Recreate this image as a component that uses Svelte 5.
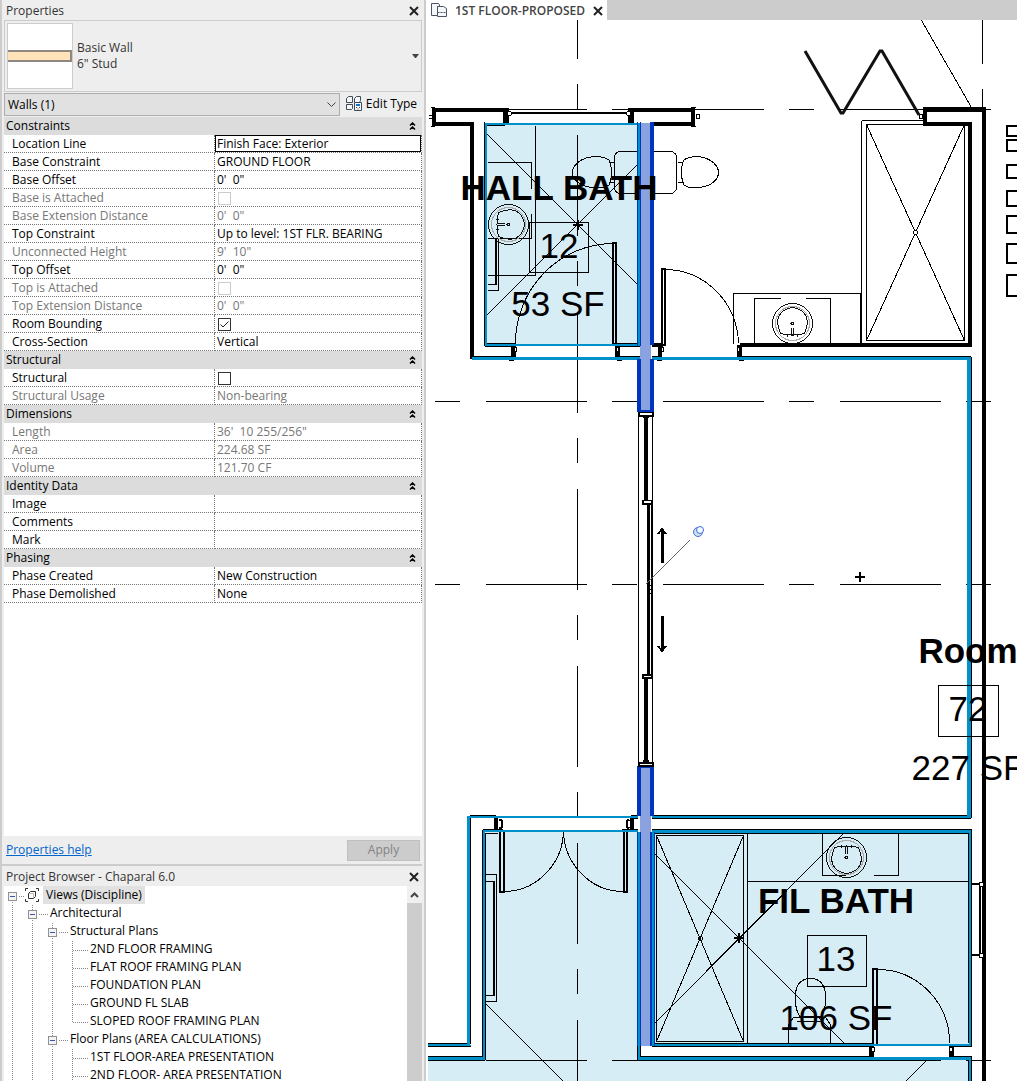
<script lang="ts">
type Row = { name: string; value?: string; check?: boolean; off?: boolean; focus?: boolean };
type Group = { title: string; rows: Row[] };
type Node = { label: string; level: number; open?: boolean; last?: boolean };

const groups: Group[] = [
  {
    title: "Constraints",
    rows: [
      { name: "Location Line", value: "Finish Face: Exterior", focus: true },
      { name: "Base Constraint", value: "GROUND FLOOR" },
      { name: "Base Offset", value: "0'  0\"" },
      { name: "Base is Attached", check: false, off: true },
      { name: "Base Extension Distance", value: "0'  0\"", off: true },
      { name: "Top Constraint", value: "Up to level: 1ST FLR. BEARING" },
      { name: "Unconnected Height", value: "9'  10\"", off: true },
      { name: "Top Offset", value: "0'  0\"" },
      { name: "Top is Attached", check: false, off: true },
      { name: "Top Extension Distance", value: "0'  0\"", off: true },
      { name: "Room Bounding", check: true },
      { name: "Cross-Section", value: "Vertical" },
    ],
  },
  {
    title: "Structural",
    rows: [
      { name: "Structural", check: false },
      { name: "Structural Usage", value: "Non-bearing", off: true },
    ],
  },
  {
    title: "Dimensions",
    rows: [
      { name: "Length", value: "36'  10 255/256\"", off: true },
      { name: "Area", value: "224.68 SF", off: true },
      { name: "Volume", value: "121.70 CF", off: true },
    ],
  },
  {
    title: "Identity Data",
    rows: [
      { name: "Image", value: "" },
      { name: "Comments", value: "" },
      { name: "Mark", value: "" },
    ],
  },
  {
    title: "Phasing",
    rows: [
      { name: "Phase Created", value: "New Construction" },
      { name: "Phase Demolished", value: "None" },
    ],
  },
];

const tree: Node[] = [
  { label: "Views (Discipline)", level: 0, open: true },
  { label: "Architectural", level: 1, open: true },
  { label: "Structural Plans", level: 2, open: true },
  { label: "2ND FLOOR FRAMING", level: 3 },
  { label: "FLAT ROOF FRAMING PLAN", level: 3 },
  { label: "FOUNDATION PLAN", level: 3 },
  { label: "GROUND FL SLAB", level: 3 },
  { label: "SLOPED ROOF FRAMING PLAN", level: 3, last: true },
  { label: "Floor Plans (AREA CALCULATIONS)", level: 2, open: true },
  { label: "1ST FLOOR-AREA PRESENTATION", level: 3 },
  { label: "2ND FLOOR- AREA PRESENTATION", level: 3 },
];

// dotted connector lines of one tree row, 20px per level
function guides(node: Node) {
  const x = 8 + node.level * 20;
  let d = "";
  for (let i = 0; i < node.level; i++) d += `M${8 + i * 20} 0V18`;
  if (node.open) {
    d += `M${x + 6} 10H${x + 15}`;
    d += node.level === 0 ? `M${x} 15V18` : `M${x} 0V5M${x} 15V18`;
  } else {
    d += `M${x} 0V${node.last ? 10 : 18}M${x} 10H${x + 15}`;
  }
  return d;
}

const slug = (group: string, name: string) => `${group}-${name}`.toLowerCase().replaceAll(" ", "-");

// partly visible stair treads at the right edge: top and height
const treads = [
  [126, 10],
  [140, 11],
  [165, 13],
  [191, 15],
  [216, 17],
  [244, 19],
  [275, 21],
];

const axes = [109, 401, 584, 1060];
</script>

<div class="app">
  <aside class="sidebar">
    <section class="panel properties">
      <header class="panel-head">
        <h2>Properties</h2>
        <button class="close" aria-label="Close Properties">
          <svg width="10" height="10" viewBox="0 0 10 10"><path d="M1 1L9 9M9 1L1 9" /></svg>
        </button>
      </header>

      <button class="type-selector">
        <svg class="thumb" width="66" height="66" viewBox="0 0 66 66">
          <rect x="0.5" y="0.5" width="65" height="65" fill="#fff" stroke="#ccc" />
          <path d="M1 27H65V39H1z" fill="#8f8880" />
          <path d="M1 29H63V37H1z" fill="#ffe3b8" />
        </svg>
        <span class="type-name">Basic Wall<br>6" Stud</span>
        <svg class="caret" width="7" height="4" viewBox="0 0 7 4"><path d="M0 0H7L4 4H3z" fill="#444" /></svg>
      </button>

      <div class="filter">
        <div class="combo">
          <select aria-label="Selection filter">
            <option>Walls (1)</option>
          </select>
          <svg width="9" height="6" viewBox="0 0 9 6"><path d="M0.5 0.5L4.5 4.5L8.5 0.5" /></svg>
        </div>
        <button class="edit-type">
          <svg width="18" height="17" viewBox="0 0 18 17" fill="#f4f6f8" stroke="#3f4a5a">
            <path d="M1.5 3.5L3.5 1.5H7.5V7.5H1.5zM9.5 3.5L11.5 1.5H15.5V5.5L14.5 7.5H9.5z" />
            <path d="M1.5 9.5H7.5V13.5L6.5 14.5H1.5z" />
            <path d="M9.5 7.5H16.5V15.5H9.5z" />
            <path d="M11 10H15" stroke="#1f6fc0" stroke-width="2" />
            <path d="M11 12.5H12M14 12.5H15M12.5 14H13.5" />
          </svg>
          Edit Type
        </button>
      </div>

      <div class="grid">
        <table>
          <colgroup>
            <col class="name-col">
            <col>
          </colgroup>
          {#each groups as group}
            <tbody>
              <tr class="group">
                <th colspan="2">
                  <button>
                    {group.title}
                    <svg width="7" height="8" viewBox="0 0 7 8"><path d="M1 3.5L3.5 1L6 3.5M1 7.5L3.5 5L6 7.5" /></svg>
                  </button>
                </th>
              </tr>
              {#each group.rows as row}
                <tr class:off={row.off}>
                  <th scope="row"><label for={slug(group.title, row.name)}>{row.name}</label></th>
                  <td class:focus={row.focus}>
                    {#if row.check !== undefined}
                      <input id={slug(group.title, row.name)} type="checkbox" checked={row.check} disabled={row.off}>
                    {:else}
                      <input id={slug(group.title, row.name)} type="text" value={row.value} disabled={row.off}>
                    {/if}
                  </td>
                </tr>
              {/each}
            </tbody>
          {/each}
        </table>
      </div>

      <footer class="panel-foot">
        <a href="#help">Properties help</a>
        <button class="apply" disabled>Apply</button>
      </footer>
    </section>

    <section class="panel browser">
      <header class="panel-head">
        <h2>Project Browser - Chaparal 6.0</h2>
        <button class="close" aria-label="Close Project Browser">
          <svg width="10" height="10" viewBox="0 0 10 10"><path d="M1 1L9 9M9 1L1 9" /></svg>
        </button>
      </header>
      <div class="tree-wrap">
        <ul class="tree">
          {#each tree as node}
            {@const x = 8 + node.level * 20}
            <li>
              <button class:root={node.level === 0}>
                <svg width={x + (node.level === 0 ? 12 : 18)} height="18" shape-rendering="crispEdges">
                  <path d={guides(node)} transform="translate(0.5 0.5)" stroke="#888" stroke-dasharray="1 1" fill="none" />
                  {#if node.open}
                    <rect x={x - 3.5} y="6.5" width="8" height="8" fill="#f4f4f4" stroke="#919191" />
                    <path d="M{x - 2} 10.5h5" stroke="#3a55a8" />
                  {/if}
                </svg>
                {#if node.level === 0}
                  <svg class="views" width="14" height="14" viewBox="0 0 14 14" fill="none" stroke="#333">
                    <path d="M3 .5H.5V3M11 .5H13.5V3M3 13.5H.5V11M11 13.5H13.5V11" />
                    <path d="M3.5 5.5L5.5 3.5H10.5V8.5L8.5 10.5H3.5z" />
                    <path d="M4 5.5H8.5V10" stroke="#bbb" />
                  </svg>
                {/if}
                <span>{node.label}</span>
              </button>
            </li>
          {/each}
        </ul>
        <div class="scrollbar">
          <button aria-label="Scroll up">
            <svg width="9" height="6" viewBox="0 0 9 6"><path d="M1 5L4.5 1.5L8 5" /></svg>
          </button>
          <div class="scroll-thumb"></div>
        </div>
      </div>
    </section>
  </aside>

  <main class="view">
    <nav class="tabs">
      <div class="tab">
        <svg width="17" height="15" viewBox="0 0 17 15" fill="#f6f7f9" stroke="#4a5462">
          <path d="M0.5 0.5H7.5L8.5 2V12.5H0.5z" />
          <path d="M6.5 3.5H12.5L15.5 5.5V13.5H6.5z" />
          <path d="M6.5 3.5V9.5M6.5 9.5H15.5" stroke-dasharray="2 1" />
        </svg>
        <a href="#plan">1ST FLOOR-PROPOSED</a>
        <button class="close" aria-label="Close view">
          <svg width="10" height="10" viewBox="0 0 10 10"><path d="M1 1L9 9M9 1L1 9" /></svg>
        </button>
      </div>
    </nav>

    <div class="canvas">
      <svg class="plan" viewBox="428 20 589 1061" preserveAspectRatio="xMinYMin slice" shape-rendering="crispEdges">
        <!-- room fills -->
        <g fill="#d7edf5">
          <rect x="485" y="123" width="154" height="222" />
          <rect x="484" y="831" width="154" height="250" />
          <rect x="652" y="831" width="318" height="215" />
          <rect x="426" y="1058" width="545" height="23" />
        </g>
        <path d="M428 1047H471V817H638V830H484V1057H428zM638 1046H971V1057H638z" fill="#fff" />

        <!-- grid axes -->
        <g stroke="#000" stroke-dasharray="101 25 25 26" transform="translate(0.5 0.5)">
          {#each axes as y}
            <path d="M308 {y}H992" />
          {/each}
          <path d="M577 -43V1081" />
          <path d="M982 -38V109" />
        </g>

        <!-- thin linework -->
        <g fill="none" stroke="#000" transform="translate(0.5 0.5)">
          <path d="M535 125V275H487M487 162H531V188M531 213V238H487M498 238V290H487M487 284H496" />
          <path d="M486 133L638 285M638 163L486 315" />
          <rect x="614" y="151" width="62" height="42" rx="6" />
          <path d="M609 162H614M609 182H614M677 162H682M677 182H682" />
          <path d="M609 160Q604 156 594 156C580 157 572 165 572 172S580 187 594 187Q604 188 609 184Q613 172 609 160z" />
          <path d="M683 160Q687 156 698 156C712 158 718 166 718 172S712 186 698 187Q687 188 683 184Q679 172 683 160z" />
          <path d="M613 243A98 100 0 0 0 515 343" />
          <path d="M665 269A74 76 0 0 1 738 343" />

          <path d="M921 20L971 107" />
          <path d="M861 120H922M861 120V343M866 124H964V340H866zM866 124L964 340M964 124L866 340" />
          <circle cx="915" cy="232" r="2" fill="#fff" />
          <path d="M733 343V293H860V343M754 342V298H780M805 298H830V342" />

          <path d="M504 891A60 62 0 0 0 563 829A60 62 0 0 0 623 891" />
          <path d="M485 874H496V1001H485M485 881H494M485 995H494M485 1003L563 1081" />
          <path d="M656 835H743V1041H656zM656 835L743 1041M743 835L656 1041M747 831V1043M747 881H968" />
          <circle cx="700" cy="938" r="2" />
          <path d="M653 852L846 1045M653 1024L845 831" />
          <path d="M822 831V875H845M873 875H898V831" />
          <path d="M877 969A72 73 0 0 1 949 1042" />
          <path d="M799 1016C792 1002 792 978 810 978S828 1002 821 1016z" />
          <path d="M788 1043V1024L793 1017H825L830 1024V1043M796 1021H822" />
          <path d="M927 1059L905 1081" />
        </g>

        <!-- basins -->
        {#each [[508, 224, -90], [792, 323, 180], [846, 857, 0]] as [x, y, angle]}
          <g fill="none" stroke="#111" transform="translate({x + 0.5} {y + 0.5}) rotate({angle})">
            <circle r="20" />
            <circle r="17" stroke="#aaa" />
            <path d="M-12 -10Q0 -13 12 -10C18 4 14 14 0 16C-14 14 -18 4 -12 -10z" />
            <path d="M-1 -12V-4M1 -12V-4M-5 -13V-10M5 -13V-10" />
            <circle r="1.5" />
          </g>
        {/each}

        <!-- exterior and partition walls -->
        <g fill="#000">
          <path d="M432 108H509V125H503V112H436V122H474V359H470V126H432z" />
          <path d="M628 108H695V126H654V122H691V112H634V125H628z" />
          <path d="M431 107H435V108H431zM431 126H435V127H431zM691 107H696V108H691zM691 126H696V127H691z" />
          <path d="M923 107H986V1081H982V112H927V122H972V347H740V343H968V126H923z" />
          <rect x="509" y="112" width="119" height="2" />
          <rect x="860" y="293" width="2" height="50" />
          <path d="M511 345H516V357H511zM615 345H620V357H615zM658 345H662V357H658zM737 345H742V357H737z" />
          <path d="M509 360H514V361H509zM617 360H622V361H617zM657 360H662V361H657zM739 360H744V361H739z" />
          <path d="M472 356H513V357H472zM484 122H485V346H484zM485 343H515V347H485zM615 343H640V347H615zM615 356H640V357H615zM652 343H663V347H652zM652 356H662V357H652zM742 356H971V357H742zM971 357H972V818H971zM484 125H505V126H484z" />
          <path d="M470 815H496V816H470zM470 818H471V1044H470zM631 815H638V816H631zM631 818H638V819H631zM652 815H971V816H652zM652 818H971V819H652z" />
          <path d="M484 833H498V834H484zM483 829H503V830H483zM482 830H483V1057H482zM485 833H486V1060H485zM622 829H638V830H622z" />
          <path d="M652 829H971V830H652zM652 833H969V834H652zM971 829H972V1047H971zM968 833H969V1043H968z" />
          <path d="M426 1043H468V1044H426zM426 1046H471V1047H426zM426 1056H485V1057H426zM426 1060H485V1061H426z" />
          <path d="M652 1043H873V1044H652zM652 1046H873V1047H652zM949 1046H972V1047H949zM640 1056H873V1057H640zM949 1056H972V1057H949zM637 1060H940V1061H637zM971 1057H972V1081H971zM968 1060H969V1081H968z" />
          <path d="M637 1046H638V1060H637zM640 1046H641V1057H640z" />
          <path d="M494 817H498V831H494zM630 817H634V831H630zM869 1046H874V1058H869zM949 1046H954V1058H949z" />
          <path d="M493 881H495V995H493zM495 238H497V284H495z" />
        </g>
        <g fill="#fff" stroke="#000" transform="translate(0.5 0.5)">
          <circle cx="509" cy="113" r="2" />
          <circle cx="628" cy="113" r="2" />
          <path d="M428 115H432V118H428M696 114H699V118H696zM919 114H922V118H919z" />
          <path d="M514 347h2v4h-2zM616 347h2v4h-2zM661 347h2v4h-2zM737 347h2v4h-2z" />
          <path d="M871 1047h3v4h-3zM949 1047h3v4h-3z" />
          <path d="M499 819C503 820 503 827 499 828M629 819C625 820 625 827 629 828" stroke-width="2" />
        </g>

        <!-- door leaves -->
        <g fill="none" stroke="#000" stroke-width="1.5">
          <rect x="613" y="243" width="3" height="101" />
          <rect x="662" y="269" width="3" height="76" />
          <rect x="500" y="831" width="4" height="61" />
          <rect x="624" y="831" width="3" height="61" />
          <rect x="873" y="969" width="4" height="76" />
        </g>
        <path d="M805 51L841 113H843L880 51H882L919 115" fill="none" stroke="#111" stroke-width="3" shape-rendering="auto" />
        <path d="M972 884H984M972 955H984" stroke="#000" stroke-width="2" />
        <rect x="979" y="884" width="2" height="71" fill="#000" />
        <path d="M979 882h4v4h-4zM979 953h4v4h-4z" fill="#fff" stroke="#000" />

        {#each treads as [y, h]}
          <rect x="1007" y={y} width="20" height={h} fill="none" stroke="#000" stroke-width="2" />
        {/each}

        <!-- room boundaries -->
        <g fill="#0091cb">
          <path d="M485 123H640V346H485zM487 125V344H638V125z" fill-rule="evenodd" />
          <path d="M472 357H640V360H472zM652 357H971V818H652V816H967V360H652z" />
          <path d="M467 816H638V818H470V1044L471 1046H426V1044H467z" />
          <path d="M483 830H638V832H485V1060H426V1057H483z" />
          <path d="M652 830H971V1046H652zM654 833V1044H969V833z" fill-rule="evenodd" />
          <path d="M638 1046H640V1057H971V1081H969V1060H638z" />
        </g>

        <!-- selected wall -->
        <rect x="640" y="123" width="11" height="289" fill="#8aa2e0" />
        <rect x="640" y="767" width="11" height="279" fill="#8aa2e0" />
        <g fill="#0036bd">
          <path d="M637 122H638V346H637zM640 122H641V346H640zM650 122H654V345H650z" />
          <path d="M637 359H641V412H637zM650 359H654V412H650zM637 410H654V412H637z" />
          <path d="M637 766H654V768H637zM637 766H641V816H637zM650 766H654V816H650z" />
          <path d="M637 832H638V1046H637zM640 832H641V1046H640zM650 832H652V1046H650zM654 832H655V1046H654z" />
        </g>
        <path d="M638 832H640V1046H638z" fill="#0091cb" />

        <!-- sliding window in the selected wall -->
        <g stroke="#000" fill="none">
          <path d="M638.5 412V767M652.5 412V767" />
          <path d="M639 412.5H653V416H639zM639 763H653V766H639z" stroke-width="1.5" fill="#fff" />
          <path d="M643 417H649M643 761H649M643 500.5H652V504H643zM643 675H652V678H643z" stroke-width="1.5" />
          <path d="M646 418V500M646 678V762" stroke-width="4" />
          <path d="M648.5 504V675" stroke-width="3" />
          <path d="M651.5 504V675M649 585H652V589H649zM649 589H652V593H649z" />
        </g>
        <g stroke="#000" fill="none">
          <path d="M662 529V563M662 616V650" stroke-width="3" />
          <path d="M658 534L662 529L666 534M658 646L662 651L666 646" stroke-width="2" />
        </g>
        <path d="M646 584L690 540" stroke="#666" shape-rendering="auto" />
        <g stroke="#3f6fe0" shape-rendering="auto">
          <circle cx="698" cy="532" r="4.5" fill="#cfe3e6" />
          <circle cx="700" cy="530" r="3.5" fill="#f4f8ff" />
        </g>

        <!-- room reference crosses -->
        <g stroke="#000" stroke-width="2">
          <path d="M573 225H583M578 220V230M855 577H865M860 572V582M734 938H744M739 933V943" />
        </g>

        <!-- room tags -->
        <g fill="none" stroke="#000">
          <rect x="529.5" y="222.5" width="59" height="50" />
          <rect x="807.5" y="935.5" width="59" height="51" />
          <rect x="938.5" y="685.5" width="60" height="51" />
        </g>
        <g class="tags" text-anchor="middle">
          <text class="room" x="559" y="200">HALL BATH</text>
          <text x="559" y="258">12</text>
          <text x="558" y="316">53 SF</text>
          <text class="room" x="836" y="913">FIL BATH</text>
          <text x="836" y="971">13</text>
          <text x="836" y="1030">106 SF</text>
          <text class="room" x="968" y="663">Room</text>
          <text x="968" y="721">72</text>
          <text x="968" y="780">227 SF</text>
        </g>
      </svg>
    </div>
  </main>
</div>

<style>
:global(body) {
  margin: 0;
}

.app {
  display: flex;
  height: 100vh;
  overflow: hidden;
  font-family: "Open Sans", "Noto Sans", sans-serif;
  font-size: 12px;
  line-height: 18px;
  color: #000;
  background: #fff;
}

button,
select,
input {
  font: inherit;
  color: inherit;
  margin: 0;
  padding: 0;
  border: 0;
  background: none;
}

.sidebar {
  flex: none;
  display: flex;
  flex-direction: column;
  width: 420px;
  border: solid #ccc;
  border-width: 0 2px;
  padding: 0 2px 0 0;
  background: #eee;
}

.panel {
  display: flex;
  flex-direction: column;
  padding-left: 2px;
}

.properties {
  flex: 1;
  min-height: 0;
}

.browser {
  flex: none;
  height: 215px;
  border-top: 2px solid #ccc;
}

.panel-head {
  display: flex;
  align-items: center;
  justify-content: space-between;
  box-sizing: border-box;
  height: 20px;
  padding: 2px 2px 0;
  color: #333;
}

h2 {
  margin: 0;
  font-size: 12px;
  font-weight: 400;
}

.close {
  display: flex;
  padding: 1px;
}

.close svg {
  fill: none;
  stroke: #222;
  stroke-width: 2;
}

.type-selector {
  display: flex;
  align-items: center;
  gap: 4px;
  height: 72px;
  padding: 0 2px;
  border: 1px solid #ccc;
  text-align: left;
  line-height: 16px;
  color: #333;
}

.type-name {
  flex: 1;
}

.filter {
  display: flex;
  align-items: center;
  gap: 5px;
  height: 25px;
}

.combo {
  position: relative;
  flex: 1;
}

.combo select {
  display: block;
  width: 100%;
  height: 23px;
  padding: 0 3px;
  border: 1px solid #adadad;
  border-radius: 0;
  background: #e1e1e1;
  appearance: none;
}

.combo svg {
  position: absolute;
  right: 4px;
  top: 9px;
  fill: none;
  stroke: #444;
  pointer-events: none;
}

.edit-type {
  display: flex;
  align-items: center;
  gap: 3px;
  padding: 0 5px 2px 0;
}

.grid {
  flex: 1;
  min-height: 0;
  overflow: hidden;
  background: #fff;
}

table {
  width: 100%;
  table-layout: fixed;
  border-collapse: separate;
  border-spacing: 0;
}

.name-col {
  width: 211px;
}

th,
td {
  box-sizing: border-box;
  height: 18px;
  padding: 0;
  border: dotted #777;
  border-width: 0 1px 1px 0;
  font-weight: 400;
  line-height: 17px;
  text-align: left;
}

tr:not(.group) th {
  padding-left: 8px;
}

tr.group th {
  border: 0;
  background: #dcdcdc;
  line-height: 18px;
}

tr.group button {
  display: flex;
  align-items: center;
  justify-content: space-between;
  width: 100%;
  padding: 0 6px 0 2px;
}

tr.group svg {
  fill: none;
  stroke: #000;
  stroke-width: 1.5;
}

td input[type="text"] {
  display: block;
  box-sizing: border-box;
  width: 100%;
  height: 17px;
  padding: 0 2px;
  white-space: pre;
}

td.focus input {
  outline: 1px solid #000;
  outline-offset: -1px;
}

.off,
.off input[type="text"] {
  color: #777;
}

input[type="checkbox"] {
  display: block;
  box-sizing: border-box;
  width: 13px;
  height: 13px;
  margin: 3px 0 1px 3px;
  border: 1px solid #333;
  background: #fff;
  appearance: none;
}

input[type="checkbox"]:disabled {
  border-color: #ccc;
}

input[type="checkbox"]:checked {
  background-image: url("data:image/svg+xml,%3Csvg xmlns='http://www.w3.org/2000/svg' viewBox='0 0 11 11'%3E%3Cpath d='M1.5 5.5L4 8L9.5 2.5' fill='none' stroke='%23222'/%3E%3C/svg%3E");
}

.panel-foot {
  display: flex;
  align-items: center;
  justify-content: space-between;
  height: 28px;
  padding: 0 2px;
}

.panel-foot a {
  color: #0066cc;
}

.apply {
  width: 73px;
  height: 21px;
  border: 1px solid #bfbfbf;
  background: #ccc;
  color: #838383;
}

.tree-wrap {
  flex: 1;
  display: flex;
  min-height: 0;
  background: #fff;
}

.tree {
  flex: 1;
  margin: 0;
  padding: 0;
  overflow: hidden;
  list-style: none;
}

.tree li {
  height: 18px;
}

.tree button {
  display: flex;
  align-items: center;
}

.tree svg {
  flex: none;
}

.views {
  margin: 0 4px 0 1px;
}

.root span {
  padding: 0 3px;
  background: #e1e1e1;
}

.scrollbar {
  display: flex;
  flex-direction: column;
  width: 15px;
  background: #f0f0f0;
}

.scrollbar button {
  display: flex;
  align-items: center;
  justify-content: center;
  height: 17px;
}

.scrollbar svg {
  fill: none;
  stroke: #444;
  stroke-width: 2;
}

.scroll-thumb {
  flex: 1;
  background: #cdcdcd;
}

.view {
  flex: 1;
  display: flex;
  flex-direction: column;
  min-width: 0;
}

.tabs {
  flex: none;
  display: flex;
  height: 20px;
  background: #ccc;
}

.tab {
  display: flex;
  align-items: center;
  gap: 7px;
  padding: 1px 3px 0 5px;
  background: #fff;
}

.tab a {
  font-weight: 600;
  color: #444;
  text-decoration: none;
}

.canvas {
  flex: 1;
  display: flex;
  min-height: 0;
  padding-left: 2px;
}

.plan {
  flex: 1;
  min-width: 0;
}

.tags {
  font-family: "Liberation Sans", Arial, sans-serif;
  font-size: 35px;
}

.room {
  font-weight: 700;
}
</style>
